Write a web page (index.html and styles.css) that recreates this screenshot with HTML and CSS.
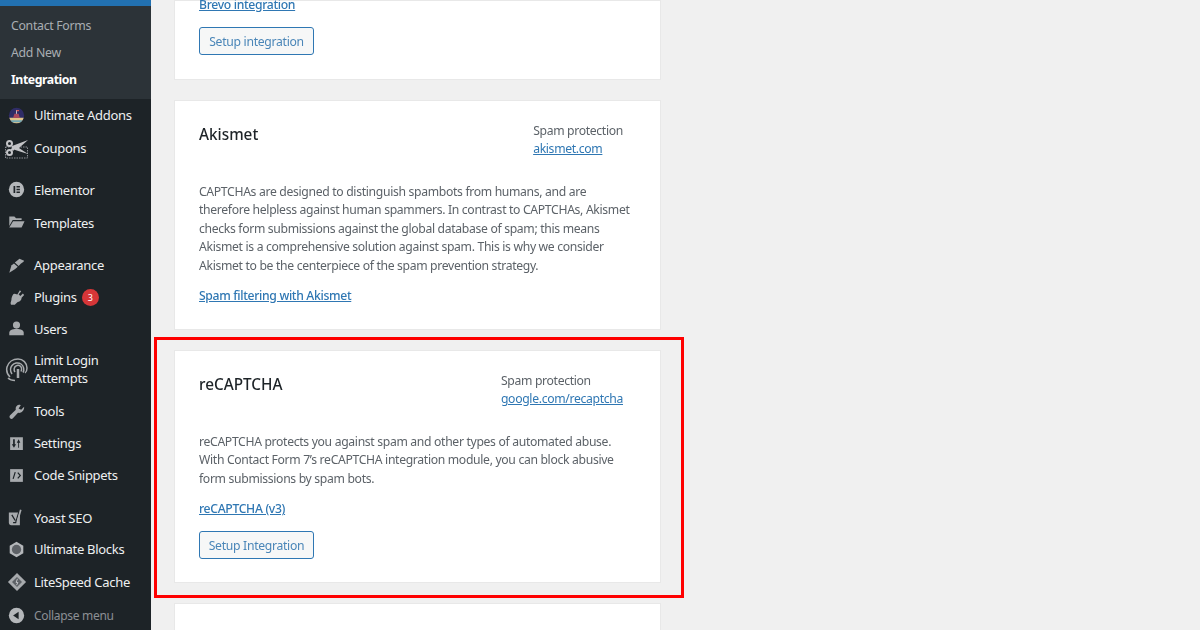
FILE: index.html
```html
<!DOCTYPE html>
<html lang="en">
<head>
<meta charset="utf-8">
<title>Integration</title>
<link rel="stylesheet" href="styles.css">
</head>
<body>
<div class="page">
  <nav class="sidebar">
    <div class="current-top"></div>
    <ul class="submenu">
      <li>Contact Forms</li>
      <li>Add New</li>
      <li class="active">Integration</li>
    </ul>
    <ul class="menu">
      <li class="item h32"><svg class="icon" viewBox="0 0 20 20"><circle cx="10" cy="10" r="9" fill="#2f2c66"/><path d="M1.500 12.500h17A9 9 0 0 1 10 19 9 9 0 0 1 1.500 12.500z" fill="#e3c58a"/><path d="M6 13l1.500-5h5l1.500 5z" fill="#a8485e"/><path d="M10 8V3.500" stroke="#d9d9e0"/><path d="M10 3.500h3v1.500h-3z" fill="#d8534f"/><path d="M3 15.500h14l-2 2.500H5z" fill="#6fa7b5"/></svg><span>Ultimate Addons</span></li>
      <li class="item h42"><svg class="icon wide" viewBox="0 0 24 20"><rect x=".5" y="8" width="22" height="11" fill="none" stroke="#8c8f94" stroke-dasharray="1.500 1"/><path d="M7 7 23 1l-9 8 9 6-16-5z" fill="#c3c4c7"/><path d="M6 9.500h3v2H6z" fill="#c3c4c7"/><circle cx="4.500" cy="4.500" r="2.500" fill="#1d2327" stroke="#c3c4c7" stroke-width="2"/><circle cx="4.500" cy="13.500" r="2.500" fill="#1d2327" stroke="#c3c4c7" stroke-width="2"/></svg><span>Coupons</span></li>
      <li class="item h33"><svg class="icon" viewBox="0 0 20 20"><circle cx="10" cy="10" r="9" fill="#b4b7ba"/><path d="M6.500 6h2v8h-2zM10 6h4v1.600h-4zM10 9.200h4v1.600h-4zM10 12.400h4V14h-4z" fill="#1d2327"/></svg><span>Elementor</span></li>
      <li class="item h43"><svg class="icon" viewBox="0 0 20 20"><path d="M1.500 3h6l2 2h6.500v2H5.500L1.500 14z" fill="#a7aaad"/><path d="M6 8.500h13.500L16 16H1.500z" fill="#a7aaad"/></svg><span>Templates</span></li>
      <li class="item h32"><svg class="icon" viewBox="0 0 20 20"><path d="M1.500 18.500 4 10l3-2.500 4.500 4-3 2.500z" fill="#a7aaad"/><path d="M8 6.500 13.500 2 19 4.500l-1 1.500-1 .5L15 8l-2.500 2.500z" fill="#a7aaad"/></svg><span>Appearance</span></li>
      <li class="item h32"><svg class="icon" viewBox="0 0 20 20"><path d="M14 1.500l1.500 1.500-3 3.200 2 2 3-3L19 7l-3 3.200c0 2.500-1.500 4-3.500 4.800l-1.500.5-3 3H3.500l-.5-2L4 13c0-3 1-5 2.500-7l1.500-.5 1 .5 2 .5z" fill="#a7aaad"/></svg><span>Plugins</span><b class="badge">3</b></li>
      <li class="item h31"><svg class="icon" viewBox="0 0 20 20"><circle cx="10" cy="6" r="4.200" fill="#a7aaad"/><path d="M1.500 18v-3c0-3 3-4.500 8.500-4.500s8.500 1.500 8.500 4.500v3z" fill="#a7aaad"/></svg><span>Users</span></li>
      <li class="item tall"><svg class="icon big" viewBox="0 0 24 26" fill="none" stroke="#a7aaad" stroke-width="1.500"><path d="M5 20C2 17 1 14 2 10 3.500 5 8 2 13 2c5 0 9 4 9 9 0 2-.5 4-2 5"/><path d="M7 17C5 14 5 11 7 8.500 9 6 13 5 16 7c3 2 3.500 6 2 8.500"/><path d="M10 15c-1.500-2-1-5 1-6 2-1.500 5-.5 5.500 2 .3 1.500 0 2.500-.5 3.500"/><path d="M13 12v9" stroke-width="2.500"/><path d="M3 21c2 2 4 2.500 7 2.500"/></svg><span>Limit Login<br>Attempts</span></li>
      <li class="item h32"><svg class="icon" viewBox="0 0 20 20"><path d="M19 4.500 15.500 8 12.500 6.500 15 2.500C12 1 9 3.500 9 6.500c0 .7 0 1 .2 1.500L2.500 14.500c-1 1-1 2.500 0 3.500s2.500.8 3.300 0l6-6.500c3.500.8 7.200-2 7.200-6.500z" fill="#a7aaad"/></svg><span>Tools</span></li>
      <li class="item h32"><svg class="icon" viewBox="0 0 20 20"><path fill-rule="evenodd" d="M2.500 2.500h15v15h-15zM6 5v6H4.500L7 15l2.500-4H8V5zm7 10V9h1.500L12.500 5 10.300 9H12v6z" fill="#a7aaad"/></svg><span>Settings</span></li>
      <li class="item h43 snippets"><svg class="icon" viewBox="0 0 20 20"><path d="M2.500 2.500h15v15h-15z" fill="#a7aaad"/><path d="M8.500 6 6 14M11.500 6.500l3 3.500-3 3.500" fill="none" stroke="#1d2327" stroke-width="1.400"/></svg><span>Code Snippets</span></li>
      <li class="item h31"><svg class="icon" viewBox="0 0 20 20"><path d="M1 4h13v15H4a3 3 0 0 1-3-3z" fill="#a7aaad"/><path d="M4.500 7 8.500 13.500M13 3 9 16H6" fill="none" stroke="#1d2327" stroke-width="1.500"/><path d="M15 1l-4 14" fill="none" stroke="#a7aaad" stroke-width="2"/></svg><span>Yoast SEO</span></li>
      <li class="item h32"><svg class="icon" viewBox="0 0 20 20"><path d="M10 1 18 5.500v9L10 19 2 14.500v-9z" fill="#b4b7ba"/><circle cx="10" cy="10" r="5.500" fill="#5d6166"/></svg><span>Ultimate Blocks</span></li>
      <li class="item h34"><svg class="icon lg" viewBox="0 0 22 22"><path d="M11 1 21 11 11 21 1 11z" fill="#a7aaad"/><path d="M11 5.500 16.500 11 11 16.500 5.500 11z" fill="#5d6166"/><path d="M11.500 7.500 10 11.500h2L10.500 14.500" fill="none" stroke="#c9cbce"/></svg><span>LiteSpeed Cache</span></li>
      <li class="item collapse"><svg class="icon" viewBox="0 0 20 20"><circle cx="10" cy="10" r="9" fill="#b4b7ba"/><path d="M12.500 5.500v9L6 10z" fill="#1d2327"/></svg><span>Collapse menu</span></li>
    </ul>
  </nav>
  <main class="content">
    <section class="card first">
      <p class="link-line"><a href="#">Brevo integration</a></p>
      <button class="btn">Setup integration</button>
    </section>
    <section class="card">
      <div class="card-head">
        <h2>Akismet</h2>
        <div class="meta">Spam protection<br><a href="#">akismet.com</a></div>
      </div>
      <p class="body">CAPTCHAs are designed to distinguish spambots from humans, and are<br>therefore helpless against human spammers. In contrast to CAPTCHAs, Akismet<br>checks form submissions against the global database of spam; this means<br>Akismet is a comprehensive solution against spam. This is why we consider<br>Akismet to be the centerpiece of the spam prevention strategy.</p>
      <p class="link-line"><a href="#">Spam filtering with Akismet</a></p>
    </section>
    <section class="card recaptcha">
      <div class="card-head">
        <h2>reCAPTCHA</h2>
        <div class="meta">Spam protection<br><a href="#">google.com/recaptcha</a></div>
      </div>
      <p class="body">reCAPTCHA protects you against spam and other types of automated abuse.<br>With Contact Form 7’s reCAPTCHA integration module, you can block abusive<br>form submissions by spam bots.</p>
      <p class="link-line"><a href="#">reCAPTCHA (v3)</a></p>
      <button class="btn">Setup Integration</button>
    </section>
    <section class="card last">
      <div class="card-head lower">
        <div class="meta push">Payments</div>
      </div>
    </section>
    <div class="highlight"></div>
  </main>
</div>
</body>
</html>
```
FILE: styles.css
```css
* { box-sizing: border-box; }
html, body { margin: 0; height: 630px; overflow: hidden; }
body { background: #f0f0f0; font-family: "Noto Sans", "Open Sans", sans-serif; }
.page { display: flex; height: 630px; overflow: hidden; filter: blur(.3px); }
.sidebar { width: 151px; flex: none; background: #1d2327; color: #f0f0f1; font-size: 13px; letter-spacing: -.3px; }
ul { list-style: none; margin: 0; padding: 0; }
.current-top { height: 6px; background: #2271b1; }
.submenu { background: #2c3338; height: 93px; padding: 10px 0 0 11px; color: #a9aeb3; font-size: 12.3px; }
.submenu li { height: 27px; line-height: 20px; }
.submenu .active { color: #fff; font-weight: 700; letter-spacing: -.45px; }
.item { display: flex; align-items: center; padding-left: 34px; position: relative; color: #eef0f1; }
.h31 { height: 31px; } .h32 { height: 32px; } .h33 { height: 33px; } .h34 { height: 34px; } .h42 { height: 42px; } .h43 { height: 43px; }
.item.h42, .item.h43 { align-items: flex-start; padding-top: 8px; line-height: 18px; }
.item.snippets { padding-top: 7px; }
.tall { height: 51px; padding-bottom: 2px; line-height: 18px; }
.collapse { height: 32px; color: #8c8f94; font-size: 12px; }
.icon { position: absolute; left: 8px; top: 50%; width: 17px; height: 17px; margin-top: -8.500px; }
.item.h42 .icon, .item.h43 .icon { top: 8px; margin-top: 0; }
.icon.wide { left: 5px; width: 24px; height: 20px; }
.icon.big { left: 5px; width: 24px; height: 26px; margin-top: -13px; }
.icon.lg { left: 7px; width: 20px; height: 20px; margin-top: -10px; }
.badge { width: 17px; height: 17px; margin-left: 5px; border-radius: 50%; background: #d63638; color: #fff; font-size: 9px; font-weight: 400; text-align: center; line-height: 17px; letter-spacing: 0; }
.content { flex: 1; position: relative; padding-left: 23px; display: flex; flex-direction: column; gap: 20px; align-items: flex-start; }
.card { width: 487px; flex: none; background: #fff; border: 1px solid #e8e8e8; padding: 0 37px 24px 24px; color: #5c6268; font-size: 12.2px; letter-spacing: -.33px; white-space: nowrap; }
.first { height: 80px; }
.first .link-line { margin: -5px 0 0; }
.recaptcha { padding-bottom: 23px; }
.last { height: 60px; }
.card-head { display: flex; justify-content: space-between; align-items: flex-start; padding-top: 21px; }
.card-head.lower { padding-top: 22px; }
h2 { margin: 0; color: #1d2327; font-size: 15.300px; font-weight: 500; line-height: 24px; letter-spacing: 0; }
.meta { line-height: 18px; }
.push { margin-left: auto; }
a { color: #2f77b3; }
.body { margin: 25px 0 0; line-height: 18.400px; }
.link-line { margin: 12px 0 0; line-height: 18px; font-weight: 500; }
.btn { display: block; width: 115px; height: 28px; margin-top: 13px; padding: 0; background: #f6f7f7; border: 1px solid #2f77b3; border-radius: 3px; color: #4a86b8; font: inherit; letter-spacing: -.3px; }
.highlight { position: absolute; left: 3px; top: 337px; width: 530px; height: 261px; border: 3px solid #f00; pointer-events: none; }
```
